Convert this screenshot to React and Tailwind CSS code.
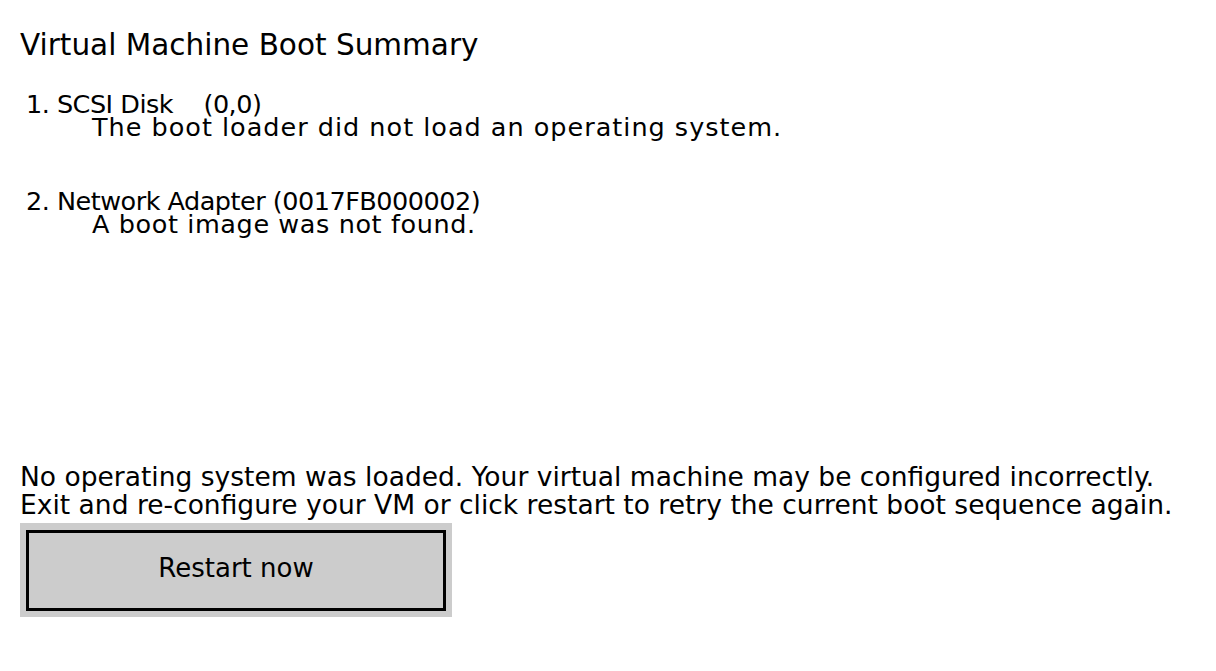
import React from "react";

const items = [
  {
    label: "1. SCSI Disk    (0,0)",
    detail: "The boot loader did not load an operating system.",
    detailClass: "pl-[66px] tracking-[1px]",
  },
  {
    label: "2. Network Adapter (0017FB000002)",
    detail: "A boot image was not found.",
    detailClass: "pl-[66px] tracking-[0.6px]",
  },
];

export default function App() {
  return (
    <div
      className="w-[1216px] h-[671px] bg-white text-black overflow-hidden pl-[20px] pt-[25px]"
      style={{ fontFamily: '"DejaVu Sans", "Open Sans", sans-serif' }}
    >
      <h1 className="text-[29.5px] leading-[40px] font-normal">Virtual Machine Boot Summary</h1>

      <div className="mt-[28px] pl-[6px] flex flex-col gap-[51px]">
        {items.map((item) => (
          <div key={item.label} className="text-[25.5px] leading-[23px]">
            <div className="whitespace-pre tracking-[-0.5px]">{item.label}</div>
            <div className={item.detailClass}>{item.detail}</div>
          </div>
        ))}
      </div>

      <div className="mt-[227px] text-[26.5px] leading-[28px]">
        <p>No operating system was loaded. Your virtual machine may be configured incorrectly.</p>
        <p>Exit and re-configure your VM or click restart to retry the current boot sequence again.</p>
      </div>

      <div className="mt-[4px] w-[432px] h-[94px] bg-[#cccccc] px-[6px] pt-[7px] pb-[6px]">
        <button className="w-full h-full border-[3px] border-black bg-[#cccccc] text-[26px] leading-[30px] pb-[5px] text-black">
          Restart now
        </button>
      </div>
    </div>
  );
}
